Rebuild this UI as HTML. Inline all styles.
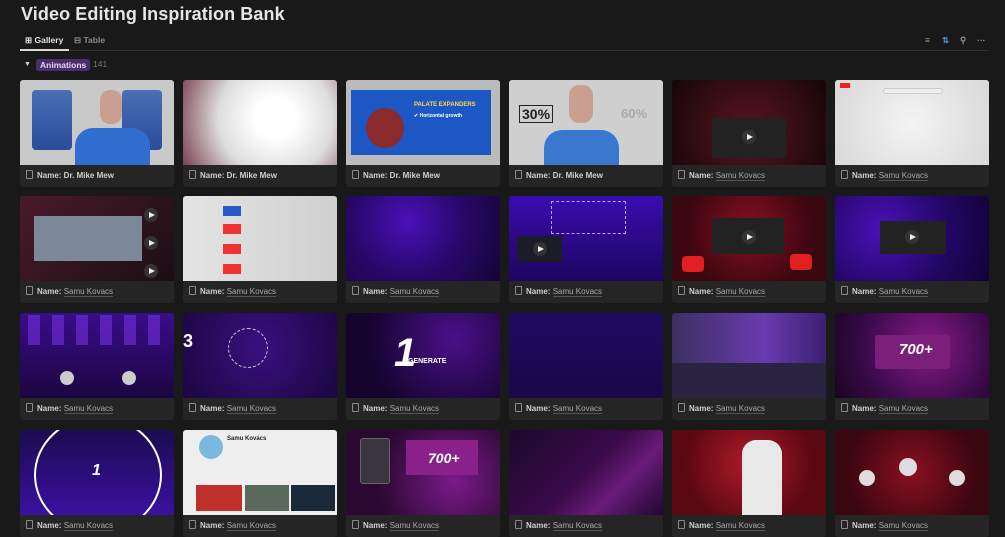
<!DOCTYPE html>
<html><head><meta charset="utf-8"><style>
*{margin:0;padding:0;box-sizing:border-box}
body{width:1005px;height:535px;overflow:hidden;background:#191919;font-family:"Liberation Sans",sans-serif;color:#d4d4d4;position:relative}
h1{position:absolute;left:21px;top:4px;font-size:18px;font-weight:bold;color:#e6e6e6;letter-spacing:0.1px}
.tabs{position:absolute;left:20px;top:30px;width:969px;height:21px;border-bottom:1px solid #2e2e2e}
.tab{position:absolute;top:5px;font-size:8.5px;font-weight:bold}
.ul{position:absolute;left:0;top:19px;width:49px;height:2px;background:#d8d8d8}
.grp{position:absolute;left:24px;top:59px;font-size:8.5px}
.pill{position:absolute;left:36px;top:59px;background:#4a2f6e;color:#e0d6f0;padding:1px 4px;border-radius:3px;font-weight:bold;font-size:8.5px}
.card{position:absolute;width:154px;height:107px;background:#252525;border-radius:3px;overflow:hidden}
.img{position:absolute;left:0;top:0;width:154px;height:85px;overflow:hidden}
.cap{position:absolute;left:6px;top:90px;font-size:8px;font-weight:bold;color:#cfcfcf;white-space:nowrap}
.cap span{font-weight:normal;color:#a8a8a8;border-bottom:1px solid #555}
.doc{display:inline-block;width:7px;height:9px;border:1px solid #8a8a8a;border-radius:1px;vertical-align:-1px;margin-right:4px}
.play{position:absolute;width:14px;height:14px;border-radius:50%;background:#333;left:70px;top:38px}
.play:after{content:"";position:absolute;left:5px;top:3.5px;border-left:6px solid #eee;border-top:3.5px solid transparent;border-bottom:3.5px solid transparent}
.t{position:absolute;color:#fff;font-weight:bold}
</style></head><body>
<h1>Video Editing Inspiration Bank</h1>
<div class="tabs">
<div class="tab" style="left:5px;color:#e0e0e0">&#8862; Gallery</div>
<div class="tab" style="left:54px;color:#8a8a8a">&#8863; Table</div>
<div class="ul"></div>
<div class="tab" style="left:905px;color:#999">&#8801;</div>
<div class="tab" style="left:922px;color:#4a8fe0">&#8645;</div>
<div class="tab" style="left:940px;color:#999">&#9906;</div>
<div class="tab" style="left:957px;color:#999">&middot;&middot;&middot;</div>
</div>
<div class="grp" style="font-size:7px;top:61px">&#9660;</div>
<div class="pill">Animations</div>
<div class="grp" style="left:93px;color:#777">141</div>

<div class="card" style="left:20px;top:80px"><div class="img" style="background:#c9c9c9">
<div style="position:absolute;left:12px;top:10px;width:40px;height:60px;background:linear-gradient(#4a6fb5,#2a4c9a);border-radius:4px"></div>
<div style="position:absolute;left:102px;top:10px;width:40px;height:60px;background:linear-gradient(#4a6fb5,#2a4c9a);border-radius:4px"></div>
<div style="position:absolute;left:55px;top:48px;width:75px;height:40px;background:#2f6ecf;border-radius:18px 18px 0 0"></div>
<div style="position:absolute;left:80px;top:10px;width:22px;height:34px;background:#c9a090;border-radius:10px"></div>
</div><div class="cap"><i class="doc"></i>Name: Dr. Mike Mew</div></div>
<div class="card" style="left:183px;top:80px"><div class="img" style="background:radial-gradient(circle at 60% 45%,#fff 20%,#ddd 55%,#7a4050 100%)"></div><div class="cap"><i class="doc"></i>Name: Dr. Mike Mew</div></div>
<div class="card" style="left:346px;top:80px"><div class="img" style="background:#bbb">
<div style="position:absolute;left:5px;top:10px;width:140px;height:65px;background:#1d57c4"></div>
<div class="t" style="left:68px;top:22px;font-size:6px;color:#ffd84a">PALATE EXPANDERS</div>
<div class="t" style="left:68px;top:33px;font-size:5px">&#10004; Horizontal growth</div>
<div style="position:absolute;left:20px;top:28px;width:38px;height:40px;background:#8a2a2a;border-radius:50%"></div>
</div><div class="cap"><i class="doc"></i>Name: Dr. Mike Mew</div></div>
<div class="card" style="left:509px;top:80px"><div class="img" style="background:#cfcfcf">
<div class="t" style="left:10px;top:25px;font-size:14px;color:#222;border:1px solid #222;padding:0 2px">30%</div>
<div class="t" style="left:112px;top:26px;font-size:13px;color:#aaa">60%</div>
<div style="position:absolute;left:35px;top:50px;width:75px;height:38px;background:#3a78d0;border-radius:18px 18px 0 0"></div>
<div style="position:absolute;left:60px;top:5px;width:24px;height:38px;background:#c9a090;border-radius:10px"></div>
</div><div class="cap"><i class="doc"></i>Name: Dr. Mike Mew</div></div>
<div class="card" style="left:672px;top:80px"><div class="img" style="background:radial-gradient(circle at 50% 60%,#5a1520,#2a0a10 70%,#150508)">
<div style="position:absolute;left:40px;top:38px;width:74px;height:40px;background:#222"></div><div class="play" style="top:50px"></div></div><div class="cap"><i class="doc"></i>Name: <span>Samu Kovacs</span></div></div>
<div class="card" style="left:835px;top:80px"><div class="img" style="background:radial-gradient(circle,#f4f4f4,#d8d8d8)">
<div style="position:absolute;left:5px;top:3px;width:10px;height:5px;background:#e22"></div>
<div style="position:absolute;left:48px;top:8px;width:60px;height:6px;border-radius:3px;background:#eee;border:1px solid #ccc"></div></div><div class="cap"><i class="doc"></i>Name: <span>Samu Kovacs</span></div></div>

<div class="card" style="left:20px;top:196px"><div class="img" style="background:linear-gradient(135deg,#4a1a2a,#1a0e14)">
<div style="position:absolute;left:14px;top:20px;width:108px;height:45px;background:#7a8898"></div>
<div class="play" style="left:124px;top:12px"></div><div class="play" style="left:124px;top:40px"></div><div class="play" style="left:124px;top:68px"></div></div><div class="cap"><i class="doc"></i>Name: <span>Samu Kovacs</span></div></div>
<div class="card" style="left:183px;top:196px"><div class="img" style="background:linear-gradient(90deg,#e4e4e4,#cfcfcf)">
<div style="position:absolute;left:40px;top:10px;width:18px;height:10px;background:#2a58c8"></div>
<div style="position:absolute;left:40px;top:28px;width:18px;height:10px;background:#e33"></div>
<div style="position:absolute;left:40px;top:48px;width:18px;height:10px;background:#e33"></div>
<div style="position:absolute;left:40px;top:68px;width:18px;height:10px;background:#e33"></div></div><div class="cap"><i class="doc"></i>Name: <span>Samu Kovacs</span></div></div>
<div class="card" style="left:346px;top:196px"><div class="img" style="background:radial-gradient(circle at 40% 30%,#4a10b8,#28086a 50%,#140436)"></div><div class="cap"><i class="doc"></i>Name: <span>Samu Kovacs</span></div></div>
<div class="card" style="left:509px;top:196px"><div class="img" style="background:linear-gradient(#3a0cb0,#1c0660)">
<div style="position:absolute;left:42px;top:5px;width:75px;height:33px;border:1px dashed #b9a4ff"></div>
<div style="position:absolute;left:8px;top:40px;width:45px;height:26px;background:#1c1c28"></div><div class="play" style="left:24px;top:46px"></div></div><div class="cap"><i class="doc"></i>Name: <span>Samu Kovacs</span></div></div>
<div class="card" style="left:672px;top:196px"><div class="img" style="background:radial-gradient(circle at 50% 40%,#8a1020,#3a0610 70%)">
<div style="position:absolute;left:40px;top:22px;width:72px;height:36px;background:#222"></div><div class="play" style="top:34px"></div>
<div style="position:absolute;left:10px;top:60px;width:22px;height:16px;background:#e02020;border-radius:4px"></div>
<div style="position:absolute;left:118px;top:58px;width:22px;height:16px;background:#e02020;border-radius:4px"></div></div><div class="cap"><i class="doc"></i>Name: <span>Samu Kovacs</span></div></div>
<div class="card" style="left:835px;top:196px"><div class="img" style="background:radial-gradient(circle at 30% 40%,#4a10b8,#200660 60%,#120336)">
<div style="position:absolute;left:45px;top:25px;width:66px;height:33px;background:#222"></div><div class="play" style="left:70px;top:34px"></div></div><div class="cap"><i class="doc"></i>Name: <span>Samu Kovacs</span></div></div>

<div class="card" style="left:20px;top:313px"><div class="img" style="background:linear-gradient(#3a0c8a,#1a0540)">
<div style="position:absolute;left:8px;top:2px;width:140px;height:30px;background:repeating-linear-gradient(90deg,#6a2ad0 0 12px,transparent 12px 24px);opacity:.7"></div>
<div style="position:absolute;left:40px;top:58px;width:14px;height:14px;border-radius:50%;background:#ccc"></div>
<div style="position:absolute;left:102px;top:58px;width:14px;height:14px;border-radius:50%;background:#ccc"></div></div><div class="cap"><i class="doc"></i>Name: <span>Samu Kovacs</span></div></div>
<div class="card" style="left:183px;top:313px"><div class="img" style="background:radial-gradient(circle at 50% 40%,#3a1080,#1a0640)">
<div style="position:absolute;left:45px;top:15px;width:40px;height:40px;border:1px dashed #ccc;border-radius:50%"></div>
<div class="t" style="left:0;top:18px;font-size:18px">3</div></div><div class="cap"><i class="doc"></i>Name: <span>Samu Kovacs</span></div></div>
<div class="card" style="left:346px;top:313px"><div class="img" style="background:radial-gradient(circle at 70% 30%,#4a108a,#14042e 70%)">
<div class="t" style="left:48px;top:18px;font-size:40px;font-style:italic">1</div>
<div class="t" style="left:62px;top:45px;font-size:7px">GENERATE</div></div><div class="cap"><i class="doc"></i>Name: <span>Samu Kovacs</span></div></div>
<div class="card" style="left:509px;top:313px"><div class="img" style="background:linear-gradient(#1e0a60,#180848)"></div><div class="cap"><i class="doc"></i>Name: <span>Samu Kovacs</span></div></div>
<div class="card" style="left:672px;top:313px"><div class="img" style="background:linear-gradient(90deg,#3a3060,#6a3ab0 60%,#3a2070)">
<div style="position:absolute;left:0;top:50px;width:154px;height:35px;background:#2a2440"></div></div><div class="cap"><i class="doc"></i>Name: <span>Samu Kovacs</span></div></div>
<div class="card" style="left:835px;top:313px"><div class="img" style="background:radial-gradient(circle at 60% 40%,#8a1a8a,#3a0a4a 60%,#1a0420)">
<div style="position:absolute;left:40px;top:22px;width:75px;height:34px;background:#7a207a;border-radius:3px"></div>
<div class="t" style="left:64px;top:28px;font-size:15px;font-style:italic">700+</div></div><div class="cap"><i class="doc"></i>Name: <span>Samu Kovacs</span></div></div>

<div class="card" style="left:20px;top:430px"><div class="img" style="background:linear-gradient(#1a0c50,#3a10a0)">
<div style="position:absolute;left:14px;top:-14px;width:128px;height:118px;border:2px solid #fff;border-radius:50%"></div>
<div class="t" style="left:72px;top:32px;font-size:16px;font-style:italic">1</div></div><div class="cap"><i class="doc"></i>Name: <span>Samu Kovacs</span></div></div>
<div class="card" style="left:183px;top:430px"><div class="img" style="background:#eee">
<div style="position:absolute;left:16px;top:5px;width:24px;height:24px;border-radius:50%;background:#7ab8e0"></div>
<div class="t" style="left:44px;top:6px;font-size:6px;color:#222">Samu Kovács</div>
<div style="position:absolute;left:13px;top:55px;width:46px;height:26px;background:#c0302a"></div>
<div style="position:absolute;left:62px;top:55px;width:44px;height:26px;background:#5a6a5a"></div>
<div style="position:absolute;left:108px;top:55px;width:44px;height:26px;background:#1a2a3a"></div></div><div class="cap"><i class="doc"></i>Name: <span>Samu Kovacs</span></div></div>
<div class="card" style="left:346px;top:430px"><div class="img" style="background:radial-gradient(circle at 70% 60%,#7a1a8a,#2a0830 65%)">
<div style="position:absolute;left:14px;top:8px;width:30px;height:46px;background:#3a3540;border:1px solid #666;border-radius:3px"></div>
<div style="position:absolute;left:60px;top:10px;width:72px;height:35px;background:#8a208a"></div>
<div class="t" style="left:82px;top:20px;font-size:14px;font-style:italic">700+</div></div><div class="cap"><i class="doc"></i>Name: <span>Samu Kovacs</span></div></div>
<div class="card" style="left:509px;top:430px"><div class="img" style="background:linear-gradient(135deg,#1a0a2a,#3a0a4a 50%,#6a1a7a 70%,#200830)"></div><div class="cap"><i class="doc"></i>Name: <span>Samu Kovacs</span></div></div>
<div class="card" style="left:672px;top:430px"><div class="img" style="background:radial-gradient(circle at 50% 40%,#b01a2a,#5a0812 70%)">
<div style="position:absolute;left:70px;top:10px;width:40px;height:75px;background:#e8e8e8;border-radius:14px 14px 0 0"></div></div><div class="cap"><i class="doc"></i>Name: <span>Samu Kovacs</span></div></div>
<div class="card" style="left:835px;top:430px"><div class="img" style="background:radial-gradient(circle at 50% 50%,#8a1020,#3a0610 75%)">
<div style="position:absolute;left:64px;top:28px;width:18px;height:18px;border-radius:50%;background:#ddd"></div>
<div style="position:absolute;left:24px;top:40px;width:16px;height:16px;border-radius:50%;background:#ddd"></div>
<div style="position:absolute;left:114px;top:40px;width:16px;height:16px;border-radius:50%;background:#ddd"></div></div><div class="cap"><i class="doc"></i>Name: <span>Samu Kovacs</span></div></div>
</body></html>
